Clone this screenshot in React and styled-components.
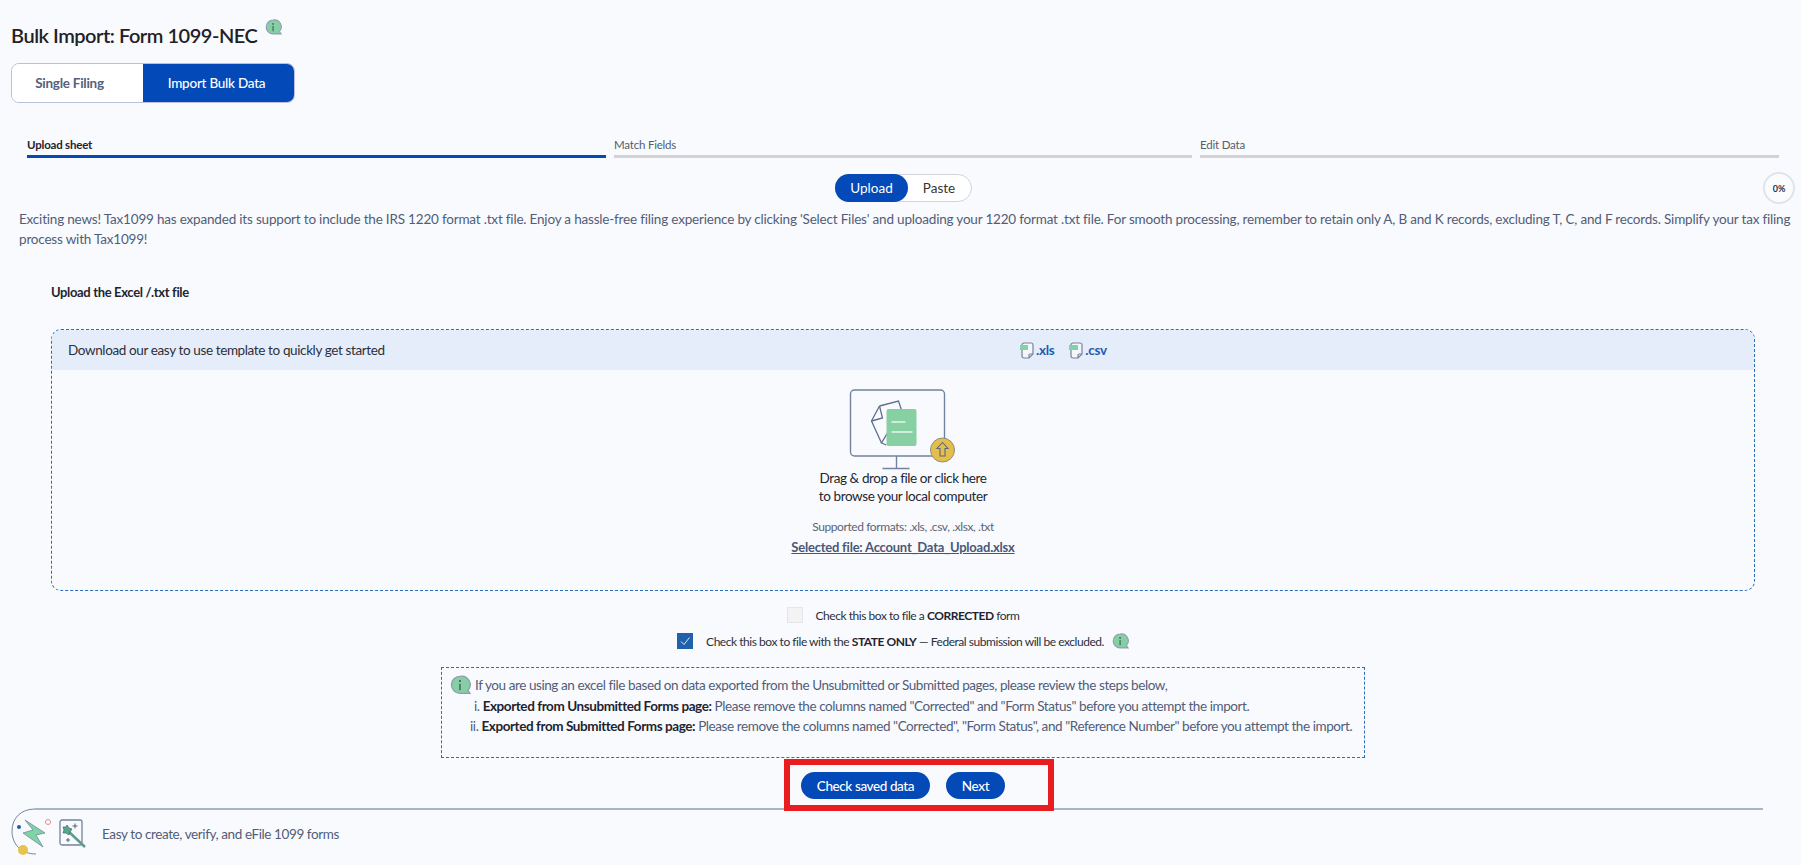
import React from "react";
import styled, { createGlobalStyle } from "styled-components";

const Global = createGlobalStyle`
  html, body { margin: 0; padding: 0; background: #f9fafd; }
  body { font-family: Lato, "Open Sans", sans-serif; color: #1f2430; }
  * { box-sizing: border-box; }
`;

const Page = styled.div`
  width: 1801px;
  height: 865px;
  overflow: hidden;
  background: #f9fafd;
`;
const Header = styled.header`
  padding: 23px 0 0 11px;
`;
const TitleRow = styled.div`
  display: flex;
  align-items: flex-start;
  gap: 8px;
`;
const Title = styled.h1`
  margin: 0;
  font-size: 20px;
  line-height: 24px;
  font-weight: 600;
  letter-spacing: -0.47px;
  color: #1f2126;
`;
const TitleTip = styled.span`
  display: block;
  margin-top: -4px;
`;
const Tabs = styled.div`
  display: flex;
  width: 284px;
  height: 40px;
  margin-top: 16px;
  border: 1px solid #b9bfdc;
  border-radius: 8px;
  overflow: hidden;
  background: #fff;
`;
const Tab = styled.div`
  display: flex;
  align-items: center;
  justify-content: center;
  width: ${(p) => (p.$active ? "151px" : "131px")};
  padding-right: ${(p) => (p.$active ? "4px" : "16px")};
  font-size: 13.5px;
  letter-spacing: -0.25px;
  font-weight: ${(p) => (p.$active ? 500 : 700)};
  color: ${(p) => (p.$active ? "#fff" : "#55617c")};
  background: ${(p) => (p.$active ? "#0349b8" : "#fff")};
`;
const Steps = styled.div`
  display: grid;
  grid-template-columns: 579px 578px 579px;
  gap: 8px;
  margin: 34px 0 0 27px;
`;
const Step = styled.div`
  font-size: 11.5px;
  line-height: 16px;
  letter-spacing: -0.2px;
  font-weight: ${(p) => (p.$active ? 700 : 400)};
  color: ${(p) => (p.$active ? "#1f2430" : "#555c6c")};
  padding-bottom: 2px;
  border-bottom: 3px solid ${(p) => (p.$active ? "#0349b8" : "#d2d3d6")};
`;
const ToggleRow = styled.div`
  position: relative;
  display: flex;
  justify-content: center;
  margin-top: 16px;
  padding-left: 6px;
`;
const Toggle = styled.div`
  display: flex;
  width: 137px;
  height: 28px;
  border: 1px solid #d2d4da;
  border-radius: 14px;
  background: #fff;
`;
const ToggleItem = styled.div`
  display: flex;
  align-items: center;
  justify-content: center;
  width: ${(p) => (p.$active ? "73px" : "62px")};
  margin: ${(p) => (p.$active ? "-1px 0 -1px -1px" : "0")};
  border-radius: 14px;
  font-size: 13.5px;
  color: ${(p) => (p.$active ? "#fff" : "#3a3433")};
  background: ${(p) => (p.$active ? "#0349b8" : "transparent")};
`;
const Progress = styled.div`
  position: absolute;
  right: 6px;
  top: -2px;
  display: flex;
  align-items: center;
  justify-content: center;
  width: 32px;
  height: 32px;
  border: 2px solid #dfe4ec;
  border-radius: 50%;
  font-size: 9px;
  font-weight: 700;
  color: #2b3346;
  background: #fbfcfe;
`;
const Notice = styled.p`
  margin: 7px 0 0;
  padding: 0 10px 0 19px;
  font-size: 13.5px;
  line-height: 20px;
  letter-spacing: -0.19px;
  color: #515d78;
`;
const Main = styled.main`
  padding: 0 46px 0 51px;
`;
const UploadLabel = styled.h2`
  margin: 34px 0 0;
  font-size: 13px;
  line-height: 18px;
  font-weight: 700;
  letter-spacing: -0.35px;
  color: #1f2430;
`;
const DropZone = styled.section`
  height: 262px;
  margin-top: 28px;
  border: 1px dashed #2a6db8;
  border-radius: 10px;
  overflow: hidden;
`;
const TemplateBar = styled.div`
  display: flex;
  align-items: center;
  height: 40px;
  padding-left: 16px;
  background: #e6edfa;
  font-size: 13.5px;
  letter-spacing: -0.38px;
  color: #2b2f3a;
`;
const TemplateText = styled.span`
  width: 952px;
`;
const TemplateLink = styled.a`
  display: flex;
  align-items: center;
  gap: 0;
  margin-right: 15px;
  font-size: 13.5px;
  font-weight: 700;
  letter-spacing: -0.3px;
  color: #1f5cae;
`;
const DropBody = styled.div`
  display: flex;
  flex-direction: column;
  align-items: center;
  padding-top: 19px;
`;
const MonitorBox = styled.div`
  margin-right: 7px;
  height: 82px;
`;
const DropText = styled.div`
  margin-top: -2px;
  font-size: 13.5px;
  line-height: 18px;
  letter-spacing: -0.4px;
  text-align: center;
  color: #23272f;
`;
const Formats = styled.div`
  margin-top: 13px;
  font-size: 12px;
  line-height: 18px;
  letter-spacing: -0.4px;
  color: #5d6472;
`;
const Selected = styled.a`
  margin-top: 2px;
  font-size: 13px;
  line-height: 18px;
  font-weight: 700;
  letter-spacing: -0.22px;
  color: #4a5877;
  text-decoration: underline;
`;
const CheckRow = styled.label`
  display: flex;
  align-items: center;
  justify-content: center;
  gap: 13px;
  height: 16px;
  margin-top: ${(p) => p.$top}px;
  font-size: 12px;
  letter-spacing: -0.46px;
  color: #2b3040;
`;
const Box = styled.span`
  display: flex;
  align-items: center;
  justify-content: center;
  width: 16px;
  height: 16px;
  background: ${(p) => (p.$on ? "#2160ad" : "#f3f3f4")};
  border: 1px solid ${(p) => (p.$on ? "#2160ad" : "#e6e6e8")};
`;
const TipGap = styled.span`
  display: block;
  height: 17px;
  margin-left: -5px;
`;
const InfoBox = styled.section`
  width: 924px;
  height: 91px;
  margin: 18px 0 0 390px;
  padding: 6px 8px;
  border: 1px dashed #2a6db8;
  font-size: 13.5px;
  line-height: 20px;
  letter-spacing: -0.42px;
  color: #515d78;
`;
const InfoHead = styled.div`
  display: flex;
  align-items: center;
  gap: 4px;
  height: 22px;
`;
const InfoLine = styled.div`
  padding-left: ${(p) => p.$indent}px;
  white-space: nowrap;
`;
const Strong = styled.b`
  font-weight: 700;
  color: #1f2430;
`;
const Actions = styled.div`
  position: relative;
  display: flex;
  justify-content: center;
  gap: 16px;
  margin-top: 14px;
`;
const Pill = styled.button`
  width: ${(p) => p.$w}px;
  height: 27px;
  padding: 0;
  border: 0;
  border-radius: 14px;
  background: #0349b8;
  color: #fff;
  font: 500 13.5px Lato, sans-serif;
  letter-spacing: -0.4px;
`;
const Highlight = styled.span`
  position: absolute;
  left: 733px;
  top: -13px;
  width: 270px;
  height: 52px;
  border: 6px solid #e91c1f;
  pointer-events: none;
`;
const Rule = styled.hr`
  height: 2px;
  margin: 9px 38px 0 35px;
  border: 0;
  background: #a9b2c6;
`;
const Footer = styled.footer`
  display: flex;
  align-items: flex-start;
  margin: -2px 0 0 11px;
`;
const FooterText = styled.span`
  margin: 16px 0 0 15px;
  font-size: 13.5px;
  line-height: 20px;
  letter-spacing: -0.4px;
  color: #515d78;
`;
const WandIcon = styled.svg`
  margin: 11px 0 0 2px;
`;

const Tip = ({ size = 16 }) => (
  <svg width={size} height={size} viewBox="0 0 16 16">
    <path d="M7.6 1a6.5 6.5 0 1 0 0 13h7.6l-1.6-2.2a6.5 6.5 0 0 0-6-10.8z" fill="#86cfa4" stroke="#8f9db3" strokeWidth="1" />
    <circle cx="7.6" cy="4.6" r=".8" fill="#3b5a55" />
    <path d="M7.6 6.6v5" fill="none" stroke="#3b5a55" strokeWidth="1" />
  </svg>
);

const FileIcon = ({ label }) => (
  <svg width="16" height="17" viewBox="0 0 16 17">
    <path d="M4 1h7a2 2 0 0 1 2 2v9l-4 4H4a2 2 0 0 1-2-2V3a2 2 0 0 1 2-2z" fill="#f4f6fb" stroke="#75849f" strokeWidth="1.2" />
    <path d="M9 16v-3a1 1 0 0 1 1-1h3" fill="none" stroke="#75849f" strokeWidth="1.2" />
    <rect x="0" y="3" width={label === "csv" ? 9 : 8} height="5" fill="#7fd4a5" />
  </svg>
);

const Monitor = () => (
  <svg width="113" height="82" viewBox="0 0 113 82">
    <rect x="7.5" y="1" width="94" height="66" rx="4" fill="none" stroke="#73829f" strokeWidth="1.4" />
    <path d="M53.5 67v12M39.5 79.5h27" stroke="#73829f" strokeWidth="1.4" fill="none" />
    <path d="M36.5 17l19-5 3 9-20 33 5 2" fill="#f9fafd" stroke="#5f6f8e" strokeWidth="1.3" />
    <path d="M36.5 17l-8 15 10 22" fill="#f9fafd" stroke="#5f6f8e" strokeWidth="1.3" />
    <path d="M36.5 17l3 12-11 3" fill="none" stroke="#5f6f8e" strokeWidth="1.3" />
    <rect x="43.5" y="20" width="30" height="37" rx="2" fill="#86d0a3" />
    <path d="M48.5 33h14M48.5 43h21" stroke="#e7f5ec" strokeWidth="1.3" />
    <circle cx="99.5" cy="61" r="12" fill="#e4bd4a" stroke="#8c8f87" strokeWidth="1" />
    <path d="M99.5 53.5l-5.5 6h3v7.5h5v-7.5h3z" fill="none" stroke="#5b6a80" strokeWidth="1.1" />
  </svg>
);

const Logo = () => (
  <svg width="46" height="50" viewBox="0 0 46 50">
    <path d="M24 1C10 1 1 10 1 23c0 13 9 23 24 23" fill="none" stroke="#75849f" strokeWidth="1" />
    <path d="M14 12l20 13-9 2 7 12-20-14 10-3z" fill="#7fd4a5" stroke="#708aa0" strokeWidth=".8" />
    <circle cx="37" cy="14" r="2.5" fill="none" stroke="#ea8f8c" strokeWidth="1" />
    <circle cx="8" cy="19" r="2" fill="#1f5cae" />
    <circle cx="12" cy="42" r="5" fill="#e6c34f" />
  </svg>
);

const Wand = () => (
  <WandIcon width="28" height="30" viewBox="0 0 28 30">
    <rect x="1" y="1" width="22" height="25" rx="2" fill="none" stroke="#73829f" strokeWidth="1.3" />
    <path d="M9 12l17 16" stroke="#5f9d8b" strokeWidth="2.6" />
    <path d="M8 6l2 3 3 1-2 3-1 3-3-2-3 0 1-3-1-3 3 0z" fill="#55a888" stroke="#4b6277" strokeWidth=".7" />
    <path d="M16 4.5v5M13.5 7h5M9 19v4M7 21h4" stroke="#4b6277" strokeWidth="1" />
  </WandIcon>
);

export default function App() {
  return (
    <Page>
      <Global />
      <Header>
        <TitleRow>
          <Title>Bulk Import: Form 1099-NEC</Title>
          <TitleTip><Tip size={17} /></TitleTip>
        </TitleRow>
        <Tabs>
          <Tab>Single Filing</Tab>
          <Tab $active>Import Bulk Data</Tab>
        </Tabs>
      </Header>
      <Steps>
        <Step $active>Upload sheet</Step>
        <Step>Match Fields</Step>
        <Step>Edit Data</Step>
      </Steps>
      <ToggleRow>
        <Toggle>
          <ToggleItem $active>Upload</ToggleItem>
          <ToggleItem>Paste</ToggleItem>
        </Toggle>
        <Progress>0%</Progress>
      </ToggleRow>
      <Notice>
        Exciting news! Tax1099 has expanded its support to include the IRS 1220 format .txt file. Enjoy a hassle-free filing experience by clicking 'Select Files' and uploading your 1220 format .txt file. For smooth processing, remember to retain only A, B and K records, excluding T, C, and F records. Simplify your tax filing process with Tax1099!
      </Notice>
      <Main>
        <UploadLabel>Upload the Excel /.txt file</UploadLabel>
        <DropZone>
          <TemplateBar>
            <TemplateText>Download our easy to use template to quickly get started</TemplateText>
            <TemplateLink><FileIcon label="xls" />.xls</TemplateLink>
            <TemplateLink><FileIcon label="csv" />.csv</TemplateLink>
          </TemplateBar>
          <DropBody>
            <MonitorBox><Monitor /></MonitorBox>
            <DropText>Drag &amp; drop a file or click here<br />to browse your local computer</DropText>
            <Formats>Supported formats: .xls, .csv, .xlsx, .txt</Formats>
            <Selected>Selected file: Account_Data_Upload.xlsx</Selected>
          </DropBody>
        </DropZone>
        <CheckRow $top={16}>
          <Box />
          <span>Check this box to file a <Strong>CORRECTED</Strong> form</span>
        </CheckRow>
        <CheckRow $top={10}>
          <Box $on>
            <svg width="12" height="12" viewBox="0 0 12 12"><path d="M2 6.5 5 9.5 10.5 2.5" fill="none" stroke="#dfe9f6" strokeWidth="1" /></svg>
          </Box>
          <span>Check this box to file with the <Strong>STATE ONLY</Strong> — Federal submission will be excluded.</span>
          <TipGap><Tip size={17} /></TipGap>
        </CheckRow>
        <InfoBox>
          <InfoHead><Tip size={21} />If you are using an excel file based on data exported from the Unsubmitted or Submitted pages, please review the steps below,</InfoHead>
          <InfoLine $indent={24}>i. <Strong>Exported from Unsubmitted Forms page:</Strong> Please remove the columns named "Corrected" and "Form Status" before you attempt the import.</InfoLine>
          <InfoLine $indent={20}>ii. <Strong>Exported from Submitted Forms page:</Strong> Please remove the columns named "Corrected", "Form Status", and "Reference Number" before you attempt the import.</InfoLine>
        </InfoBox>
        <Actions>
          <Pill $w={129}>Check saved data</Pill>
          <Pill $w={59}>Next</Pill>
          <Highlight />
        </Actions>
      </Main>
      <Rule />
      <Footer>
        <Logo />
        <Wand />
        <FooterText>Easy to create, verify, and eFile 1099 forms</FooterText>
      </Footer>
    </Page>
  );
}
